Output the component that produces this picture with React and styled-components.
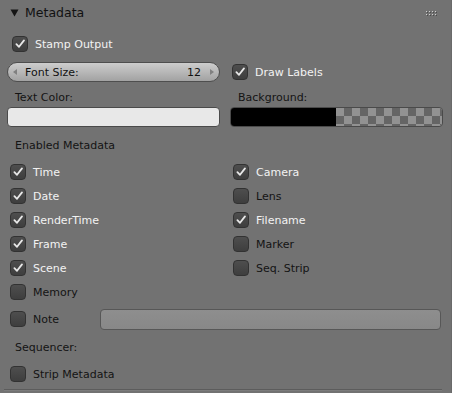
import React from 'react';
import styled, { createGlobalStyle } from 'styled-components';

const GlobalStyle = createGlobalStyle`
	html, body {
		margin: 0;
		padding: 0;
		background: #727272;
	}
	body {
		font-family: 'DejaVu Sans', 'Liberation Sans', sans-serif;
		font-size: 11px;
	}
`;

const leftItems = [
	{ label: 'Time', on: true },
	{ label: 'Date', on: true },
	{ label: 'RenderTime', on: true },
	{ label: 'Frame', on: true },
	{ label: 'Scene', on: true },
	{ label: 'Memory', on: false },
];

const rightItems = [
	{ label: 'Camera', on: true },
	{ label: 'Lens', on: false },
	{ label: 'Filename', on: true },
	{ label: 'Marker', on: false },
	{ label: 'Seq. Strip', on: false },
];

const Check = ({ on, label }) => (
	<CheckRow>
		<Box>
			{on && (
				<svg width="12" height="12" viewBox="0 0 12 12">
					<polyline
						points="2.4,6.2 5,8.8 10,2.4"
						fill="none"
						stroke="#e8e8e8"
						strokeWidth="1.8"
						strokeLinecap="round"
						strokeLinejoin="round"
					/>
				</svg>
			)}
		</Box>
		<CheckLabel on={on ? 1 : 0}>{label}</CheckLabel>
	</CheckRow>
);

const App = () => {
	return (
		<>
			<GlobalStyle />
			<Panel>
				<Header>
					<svg width="9" height="8" viewBox="0 0 9 8">
						<polygon points="0.5,0.5 8.5,0.5 4.5,7.5" fill="#141414" />
					</svg>
					<HeaderTitle>Metadata</HeaderTitle>
					<Grip>
						<svg width="11" height="5" viewBox="0 0 11 5">
							{[0, 3, 6, 9].map((x) =>
								[0, 3].map((y) => (
									<g key={`${x}-${y}`}>
										<rect x={x + 1} y={y + 1} width="1" height="1" fill="#4a4a4a" />
										<rect x={x} y={y} width="1" height="1" fill="#cfcfcf" />
									</g>
								))
							)}
						</svg>
					</Grip>
				</Header>

				<StampRow>
					<Check on label="Stamp Output" />
				</StampRow>

				<TwoCols top={4} height={20}>
					<Slider>
						<Arrow dir="left" />
						<SliderText>Font Size:</SliderText>
						<SliderValue>12</SliderValue>
						<Arrow dir="right" />
					</Slider>
					<Check on label="Draw Labels" />
				</TwoCols>

				<TwoCols top={9} height={16}>
					<FieldLabel>Text Color:</FieldLabel>
					<FieldLabel>Background:</FieldLabel>
				</TwoCols>

				<TwoCols top={2} height={20}>
					<Swatch />
					<AlphaSwatch>
						<Solid />
						<Checker />
					</AlphaSwatch>
				</TwoCols>

				<SectionLabel top={11}>Enabled Metadata</SectionLabel>

				<Grid>
					<Column>
						{leftItems.map((it) => (
							<Check key={it.label} on={it.on} label={it.label} />
						))}
					</Column>
					<Column>
						{rightItems.map((it) => (
							<Check key={it.label} on={it.on} label={it.label} />
						))}
					</Column>
				</Grid>

				<NoteRow>
					<NoteCheck>
						<Check on={false} label="Note" />
					</NoteCheck>
					<TextField />
				</NoteRow>

				<SectionLabel top={10}>Sequencer:</SectionLabel>

				<StripRow>
					<Check on={false} label="Strip Metadata" />
				</StripRow>

				<BottomLine />
			</Panel>
		</>
	);
};

export default App;

const Panel = styled.div`
	width: 452px;
	height: 393px;
	box-sizing: border-box;
	padding: 0 9px 0 7px;
	background: #727272;
	border-right: 1px solid #6a6a6a;
	overflow: hidden;
`;
const Header = styled.div`
	height: 25px;
	display: flex;
	align-items: center;
	padding-left: 3px;
	svg {
		flex: none;
	}
`;
const HeaderTitle = styled.span`
	font-size: 12.5px;
	color: #111;
	margin-left: 6px;
	flex: 1;
`;
const Grip = styled.div`
	display: flex;
	align-items: center;
	margin-right: 5px;
	margin-top: 2px;
`;
const StampRow = styled.div`
	margin-top: 7px;
	height: 24px;
	display: flex;
	align-items: center;
	padding-left: 3px;
`;
const TwoCols = styled.div`
	margin-top: ${(p) => p.top}px;
	height: ${(p) => p.height}px;
	display: grid;
	grid-template-columns: 213px 213px;
	column-gap: 10px;
	align-items: center;
`;
const CheckRow = styled.div`
	display: flex;
	align-items: center;
	height: 24px;
`;
const Box = styled.div`
	width: 16px;
	height: 16px;
	box-sizing: border-box;
	border-radius: 4px;
	border: 1px solid #323232;
	background: linear-gradient(#4e4e4e, #3e3e3e);
	display: flex;
	align-items: center;
	justify-content: center;
	flex: none;
	margin-left: 2px;
`;
const CheckLabel = styled.span`
	margin-left: 7px;
	color: ${(p) => (p.on ? '#f2f2f2' : '#141414')};
	white-space: nowrap;
`;
const Slider = styled.div`
	height: 20px;
	box-sizing: border-box;
	border: 1px solid #4e4e4e;
	border-radius: 10px;
	background: linear-gradient(#cdcdcd, #a2a2a2);
	display: flex;
	align-items: center;
	padding: 0 5px;
`;
const Arrow = styled.span`
	width: 0;
	height: 0;
	border-top: 3px solid transparent;
	border-bottom: 3px solid transparent;
	${(p) =>
		p.dir === 'left'
			? 'border-right: 4px solid #808080;'
			: 'border-left: 4px solid #808080;'}
	flex: none;
`;
const SliderText = styled.span`
	color: #111;
	margin-left: 8px;
	flex: 1;
`;
const SliderValue = styled.span`
	color: #111;
	margin-right: 9px;
`;
const FieldLabel = styled.span`
	color: #141414;
	padding-left: 8px;
`;
const Swatch = styled.div`
	height: 20px;
	box-sizing: border-box;
	border: 1px solid #4a4a4a;
	border-radius: 4px;
	background: #e8e8e8;
`;
const AlphaSwatch = styled.div`
	height: 20px;
	box-sizing: border-box;
	border: 1px solid #4a4a4a;
	border-radius: 4px;
	overflow: hidden;
	display: flex;
`;
const Solid = styled.div`
	width: 105px;
	background: #000;
`;
const Checker = styled.div`
	flex: 1;
	background-color: #929292;
	background-image: linear-gradient(45deg, #656565 25%, transparent 25%, transparent 75%, #656565 75%),
		linear-gradient(45deg, #656565 25%, transparent 25%, transparent 75%, #656565 75%);
	background-size: 16px 16px;
	background-position: 0 0, 8px 8px;
`;
const SectionLabel = styled.div`
	margin-top: ${(p) => p.top}px;
	height: 16px;
	line-height: 16px;
	color: #141414;
	padding-left: 8px;
`;
const Grid = styled.div`
	margin-top: 6px;
	display: grid;
	grid-template-columns: 213px 213px;
	column-gap: 10px;
`;
const Column = styled.div`
	display: flex;
	flex-direction: column;
	padding-left: 1px;
`;
const NoteRow = styled.div`
	margin-top: 4px;
	height: 22px;
	display: flex;
	align-items: center;
	padding-left: 1px;
`;
const NoteCheck = styled.div`
	width: 92px;
	flex: none;
`;
const TextField = styled.div`
	flex: 1;
	height: 21px;
	box-sizing: border-box;
	border: 1px solid #575757;
	border-radius: 4px;
	background: linear-gradient(#8e8e8e, #888888);
	margin-right: 1px;
`;
const StripRow = styled.div`
	margin-top: 6px;
	height: 24px;
	display: flex;
	align-items: center;
	padding-left: 1px;
`;
const BottomLine = styled.div`
	margin-top: 3px;
	height: 1px;
	background: #5c5c5c;
	border-bottom: 1px solid #7c7c7c;
	margin-left: -3px;
`;
